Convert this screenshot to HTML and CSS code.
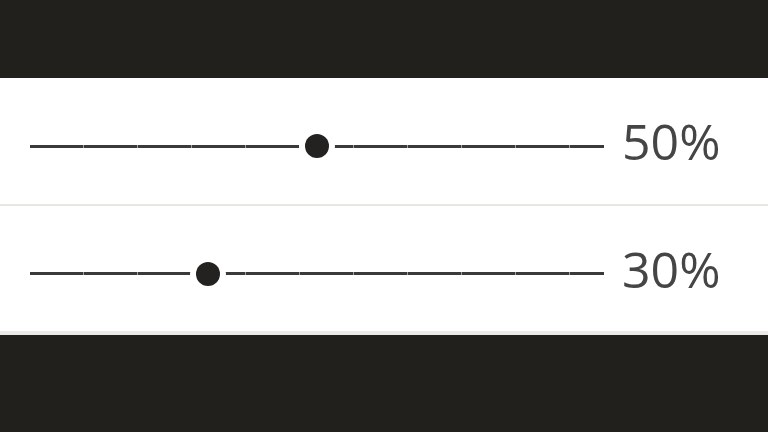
FILE: index.html
```html
<!DOCTYPE html>
<html>
<head>
<meta charset="utf-8">
<link rel="stylesheet" href="styles.css">
</head>
<body>
<div class="panel">
  <div class="row">
    <div class="slider">
      <div class="track"></div>
      <div class="thumb" style="left: 287px"></div>
    </div>
    <div class="value">50%</div>
  </div>
  <div class="row last">
    <div class="slider">
      <div class="track"></div>
      <div class="thumb" style="left: 178px"></div>
    </div>
    <div class="value">30%</div>
  </div>
</div>
</body>
</html>
```
FILE: styles.css
```css
html, body {
  margin: 0;
  padding: 0;
  background: #22201d;
  width: 768px;
  height: 432px;
  overflow: hidden;
}
.panel {
  margin-top: 78px;
  background: #ffffff;
}
.row {
  height: 126px;
  display: flex;
  align-items: center;
  padding-left: 30px;
  border-bottom: 2px solid #e7e6e2;
  box-sizing: content-box;
}
.row.last {
  height: 125px;
  border-bottom: 4px solid #ebeae6;
}
.slider {
  position: relative;
  width: 574px;
  height: 34px;
  margin-top: 10px;
  display: flex;
  align-items: center;
}
.track {
  width: 100%;
  height: 3px;
  background: repeating-linear-gradient(to right, #3a3a3a 0, #3a3a3a 53px, #a0a0a0 53px, #a0a0a0 54px);
}
.thumb {
  position: absolute;
  top: 50%;
  width: 24px;
  height: 24px;
  margin-top: -12px;
  margin-left: -12px;
  border-radius: 50%;
  background: #232220;
  box-shadow: 0 0 0 6px #ffffff;
}
.value {
  margin-left: 18px;
  font-family: "Open Sans", "Noto Sans", sans-serif;
  font-size: 50px;
  color: #454545;
  line-height: 1;
}
```
